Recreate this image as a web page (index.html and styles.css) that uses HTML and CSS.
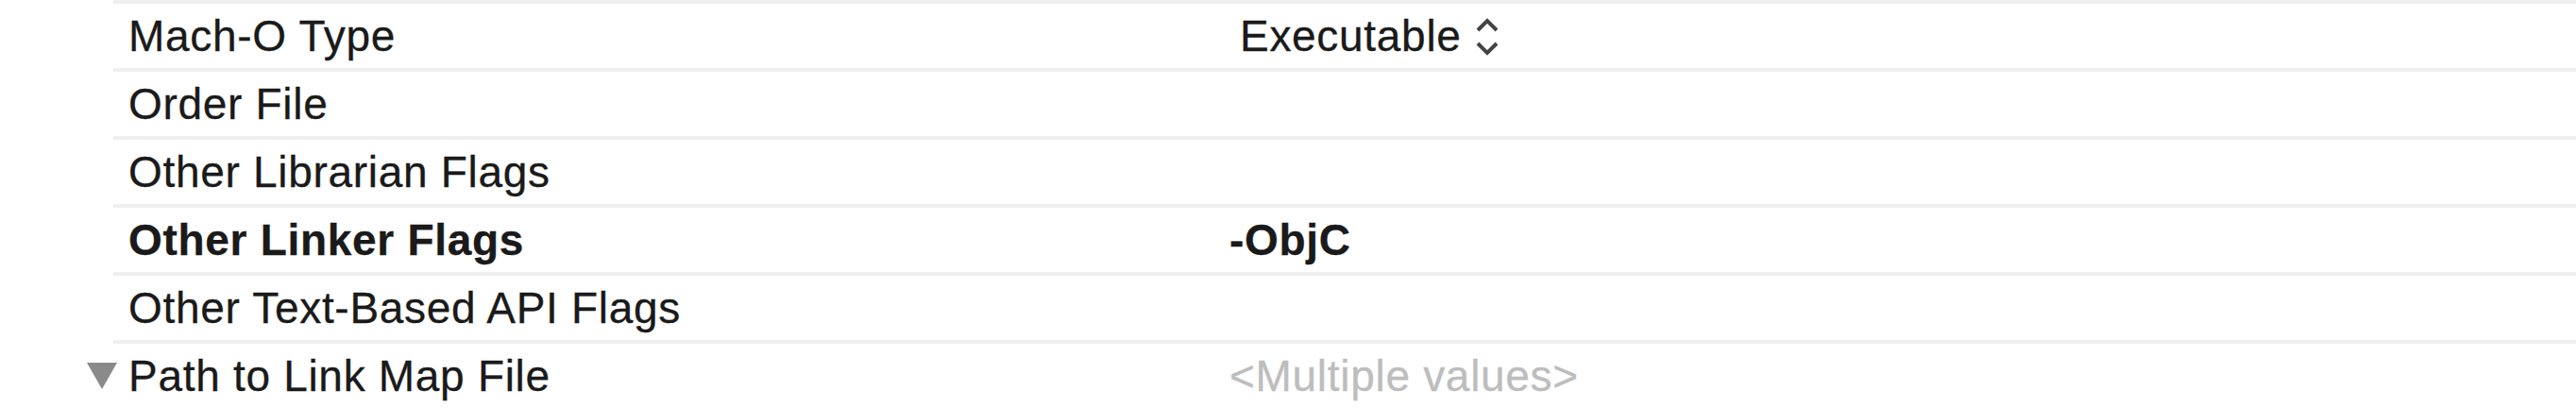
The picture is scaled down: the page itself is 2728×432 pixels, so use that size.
FILE: index.html
```html
<!DOCTYPE html>
<html>
<head>
<meta charset="utf-8">
<link rel="stylesheet" href="styles.css">
</head>
<body>
<div class="settings">
  <div class="row">
    <div class="gutter"></div>
    <div class="main">
      <div class="name">Mach-O Type</div>
      <div class="value">
        <span class="popup">Executable
          <svg class="updown" width="26" height="40" viewBox="0 0 26 40"><path d="M3 13 L13 3 L23 13" fill="none" stroke="#444" stroke-width="4"/><path d="M3 27 L13 37 L23 27" fill="none" stroke="#444" stroke-width="4"/></svg>
        </span>
      </div>
    </div>
  </div>
  <div class="row">
    <div class="gutter"></div>
    <div class="main">
      <div class="name">Order File</div>
      <div class="value"></div>
    </div>
  </div>
  <div class="row">
    <div class="gutter"></div>
    <div class="main">
      <div class="name">Other Librarian Flags</div>
      <div class="value"></div>
    </div>
  </div>
  <div class="row bold">
    <div class="gutter"></div>
    <div class="main">
      <div class="name">Other Linker Flags</div>
      <div class="value">-ObjC</div>
    </div>
  </div>
  <div class="row">
    <div class="gutter"></div>
    <div class="main">
      <div class="name">Other Text-Based API Flags</div>
      <div class="value"></div>
    </div>
  </div>
  <div class="row">
    <div class="gutter"><span class="disclosure"></span></div>
    <div class="main">
      <div class="name">Path to Link Map File</div>
      <div class="value muted">&lt;Multiple values&gt;</div>
    </div>
  </div>
</div>
</body>
</html>
```
FILE: styles.css
```css
html, body {
  margin: 0;
  padding: 0;
  background: #ffffff;
}
body {
  font-family: "Liberation Sans", Arial, sans-serif;
  font-size: 46px;
  letter-spacing: 0.7px;
  color: #1a1a1a;
  -webkit-text-stroke: 0.3px #1a1a1a;
}
.settings {
  display: flex;
  flex-direction: column;
  width: 2728px;
}
.row {
  display: flex;
  height: 72px;
}
.gutter {
  width: 120px;
  flex-shrink: 0;
  display: flex;
  align-items: center;
}
.main {
  flex: 1;
  display: flex;
  align-items: center;
  border-top: 4px solid #efefef;
}
.name {
  width: 1166px;
  padding-left: 16px;
  flex-shrink: 0;
  white-space: nowrap;
}
.value {
  flex: 1;
  white-space: nowrap;
}
.bold .name, .bold .value {
  font-weight: bold;
}
.muted {
  color: #bdbdbd;
  -webkit-text-stroke: 0.3px #bdbdbd;
}
.popup {
  display: inline-flex;
  align-items: center;
  padding-left: 11px;
  gap: 14px;
}
.updown {
  display: block;
  margin-top: 2px;
}
.disclosure {
  width: 0;
  height: 0;
  margin-left: 92px;
  margin-top: 4px;
  border-left: 16px solid transparent;
  border-right: 16px solid transparent;
  border-top: 28px solid #8a8a8a;
}
```
